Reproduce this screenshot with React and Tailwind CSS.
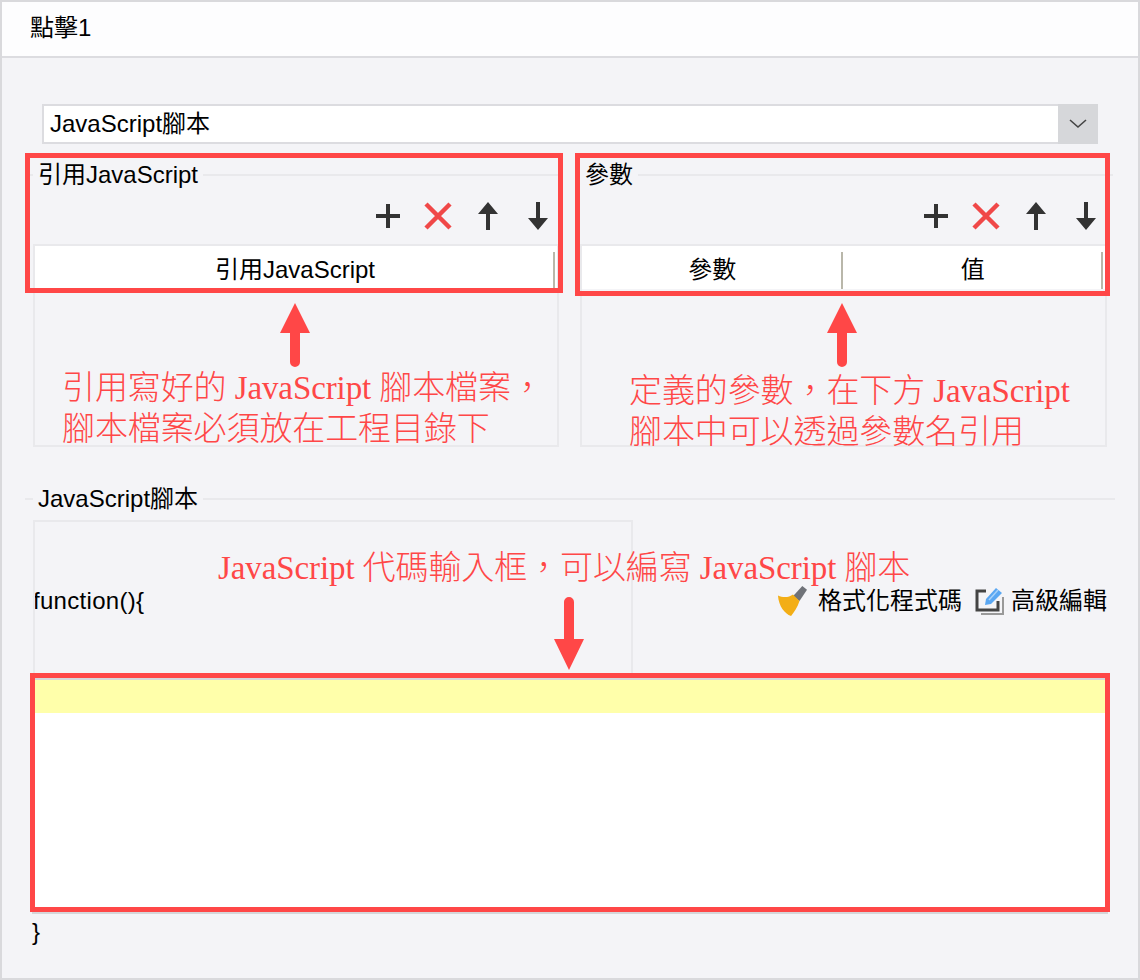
const sansFont = "font-['Liberation_Sans','Noto_Sans_CJK_TC',sans-serif]";
const noteFont = "font-['Liberation_Serif','Noto_Sans_CJK_TC',serif] font-light text-[33px] tracking-[-0.1px] leading-[41px] text-[#ff4747] whitespace-pre";

function ToolIcons() {
    return (
        <div className="flex justify-end h-[30px] mt-[11px] -mr-[4px]">
            <svg width="50" height="30" viewBox="0 0 50 30" className="block">
                <path d="M13 15H37M25 3V27" stroke="#333" strokeWidth="4" fill="none" />
            </svg>
            <svg width="50" height="30" viewBox="0 0 50 30" className="block">
                <path d="M13 3L37 27M37 3L13 27" stroke="#f04848" strokeWidth="4.5" fill="none" />
            </svg>
            <svg width="50" height="30" viewBox="0 0 50 30" className="block">
                <path d="M25 1L35 13H27V29H23V13H15Z" fill="#333" />
            </svg>
            <svg width="50" height="30" viewBox="0 0 50 30" className="block">
                <path d="M25 29L35 17H27V1H23V17H15Z" fill="#333" />
            </svg>
        </div>
    );
}

function Legend({ text, leadClass = "w-[8px]" }) {
    return (
        <div className="flex items-center h-[30px]">
            <div className={`${leadClass} h-[2px] bg-[#e9e9ec]`}></div>
            <div className="px-[5px] text-[24px] leading-[30px] text-black">{text}</div>
            <div className="flex-1 h-[2px] bg-[#e9e9ec]"></div>
        </div>
    );
}

function Panel({ title, columns, leadClass, bodyClass }) {
    return (
        <div className="w-[538px]">
            <Legend text={title} leadClass={leadClass} />
            <div className={bodyClass}>
                <ToolIcons />
                <div className="mt-[13px] h-[203px] border-2 border-[#e9e9ec]">
                    <div className="flex h-[43px] bg-white pr-[2px]">
                        {columns.map((col) => (
                            <div key={col} className="flex-1 relative text-center text-[24px] leading-[48px] text-black">
                                {col}
                                <div className="absolute right-0 top-[6px] bottom-0 w-[2px] bg-[#b9b7aa]"></div>
                            </div>
                        ))}
                    </div>
                </div>
            </div>
        </div>
    );
}

function UpArrow({ className }) {
    return (
        <svg width="30" height="64" viewBox="0 0 30 64" className={className}>
            <path d="M15 0L30 30H20V59A5 5 0 0 1 10 59V30H0Z" fill="#ff4747" />
        </svg>
    );
}

function DownArrow({ className }) {
    return (
        <svg width="30" height="73" viewBox="0 0 30 73" className={className}>
            <path d="M15 73L30 42H20V5A5 5 0 0 0 10 5V42H0Z" fill="#ff4747" />
        </svg>
    );
}

function App() {
    return (
        <div className={`relative w-[1140px] h-[980px] overflow-hidden border-2 border-[#d9d9dc] bg-[#f4f4f7] ${sansFont}`}>
            <div className="h-[56px] border-b-2 border-[#dcdce0] bg-[#fdfdfe] pl-[28px] text-[24px] leading-[52px] text-black">點擊1</div>

            <div className="px-[23px]">
                <div className="mx-[17px] mt-[46px] h-[40px] flex border-2 border-r-0 border-[#dcdce0] bg-white">
                    <div className="flex-1 pl-[6px] text-[24px] leading-[36px] text-black">JavaScript腳本</div>
                    <div className="w-[40px] -my-[2px] bg-[#d6d7da] flex items-center justify-center">
                        <svg width="20" height="12" viewBox="0 0 20 12">
                            <path d="M2 2L10 9L18 2" stroke="#444" strokeWidth="1.6" fill="none" />
                        </svg>
                    </div>
                </div>

                <div className="flex gap-[12px] mt-[16px]">
                    <Panel title="引用JavaScript" columns={["引用JavaScript"]} leadClass="w-[8px]" bodyClass="ml-[8px] w-[526px]" />
                    <Panel title="參數" columns={["參數", "值"]} leadClass="w-[5px]" bodyClass="ml-[5px] w-[527px]" />
                </div>

                <div className="mt-[37px]">
                    <Legend text="JavaScript腳本" />
                </div>

                <div className="relative mt-[6px] h-[158px] ml-[8px] mr-[8px] pt-[4px] flex items-center justify-between text-[24px] text-black">
                    <div className="absolute left-0 top-0 w-[600px] h-[162px] border-2 border-[#e9e9ec]"></div>
                    <div className="tracking-[0.3px]">function(){"{"}</div>
                    <div className="flex items-center">
                        <svg width="30" height="32" viewBox="0 0 32 32" className="block">
                            <path d="M17 11L27 0L32 4L24 16Z" fill="#6f7278" />
                            <path d="M1 10C7 13 13 12 17 9L24 16C22 23 18 28 15 32C8 29 2 22 1 10Z" fill="#f3ae16" />
                        </svg>
                        <span className="ml-[11px] mr-[13px]">格式化程式碼</span>
                        <svg width="30" height="30" viewBox="0 0 30 30" className="block">
                            <path d="M11 5H2V24H23V15" stroke="#444" strokeWidth="3" fill="none" />
                            <path d="M6 28H28V11" stroke="#999" strokeWidth="2" fill="none" />
                            <path d="M10 19L11 13L21 2L27 7L16 18Z" fill="#5aa7f2" />
                            <path d="M14 14L23 4" stroke="#a8d2fa" strokeWidth="1.5" fill="none" />
                        </svg>
                        <span className="ml-[6px]">高級編輯</span>
                    </div>
                </div>

                <div className="relative ml-[7px] w-[1076px] h-[236px] border-2 border-[#d6d6d9] bg-white">
                    <div className="h-[33px] bg-[#ffffaa]"></div>
                </div>

                <div className="ml-[7px] mt-[3px] text-[24px] leading-[30px] text-black">{"}"}</div>
            </div>

            {/* red notes drawn over the form */}
            <div className="absolute left-[23px] top-[151px] w-[538px] h-[140px] border-[5px] border-[#ff4747]"></div>
            <div className="absolute left-[573px] top-[151px] w-[535px] h-[143px] border-[5px] border-[#ff4747]"></div>
            <div className="absolute left-[28px] top-[671px] w-[1080px] h-[239px] border-[5px] border-[#ff4747]"></div>

            <UpArrow className="absolute left-[278px] top-[301px]" />
            <UpArrow className="absolute left-[825px] top-[301px]" />
            <DownArrow className="absolute left-[552px] top-[595px]" />

            <div className={`absolute left-[60px] top-[366px] ${noteFont}`}>
                <div>引用寫好的 JavaScript 腳本檔案，</div>
                <div>腳本檔案必須放在工程目錄下</div>
            </div>
            <div className={`absolute left-[627px] top-[369px] ${noteFont}`}>
                <div>定義的參數，在下方 JavaScript</div>
                <div>腳本中可以透過參數名引用</div>
            </div>
            <div className={`absolute left-[216px] top-[546px] ${noteFont}`}>
                JavaScript 代碼輸入框，可以編寫 JavaScript 腳本
            </div>
        </div>
    );
}

export default App;
